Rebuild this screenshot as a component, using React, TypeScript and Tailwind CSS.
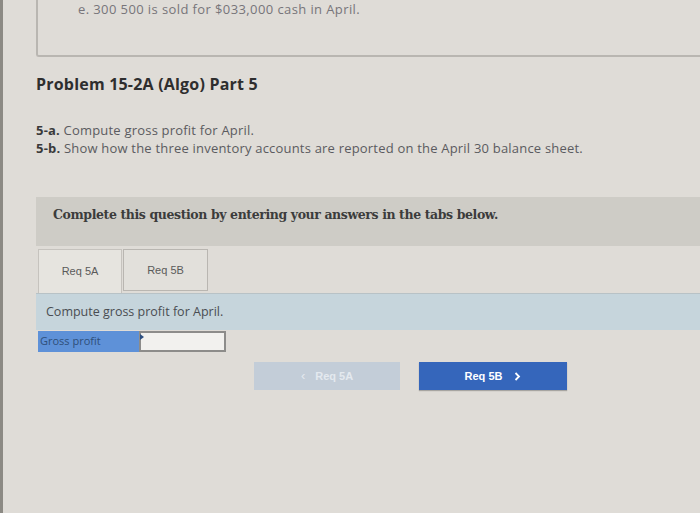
import React from "react";

export default function App() {
  return (
    <div className="w-[700px] h-[513px] overflow-hidden flex bg-[#dfdcd7] text-[#3a3a3a]" style={{ fontFamily: '"Open Sans", "Liberation Sans", sans-serif' }}>
      <div className="w-[3px] shrink-0 bg-[#8c8a84]" />
      <div className="flex-1 flex flex-col pl-[33px]">
        {/* top cropped box */}
        <div className="h-[57px] shrink-0 border-l-2 border-b-2 border-[#b9b6b1] rounded-bl-[3px] overflow-hidden pl-[40px]">
          <div className="mt-[1px] text-[13px] leading-[16px] text-[#77757a] tracking-[0.4px]">e. 300 500 is sold for $033,000 cash in April.</div>
        </div>
        <div className="mt-[15px] text-[16px] font-bold text-[#2e2e2e] tracking-[0.2px]">
          Problem 15-2A (Algo) Part 5
        </div>
        <div className="mt-[25px] text-[13px] leading-[18px] text-[#5b5b60] tracking-[0.2px]">
          <div><span className="font-bold text-[#3a3a3a]">5-a.</span> Compute gross profit for April.</div>
          <div><span className="font-bold text-[#3a3a3a]">5-b.</span> Show how the three inventory accounts are reported on the April 30 balance sheet.</div>
        </div>
        <div className="mt-[40px] h-[49px] shrink-0 bg-[#ceccc6] flex items-start pt-[9px] pl-[17px]">
          <span className="text-[12.5px] font-bold text-[#3c3c3c]" style={{ fontFamily: '"DejaVu Serif", "Liberation Serif", serif', letterSpacing: '-0.4px' }}>
            Complete this question by entering your answers in the tabs below.
          </span>
        </div>
        <div className="flex items-end h-[47px] shrink-0 pl-[2px] pt-[3px]">
          <div className="w-[84px] h-[44px] border border-b-0 border-[#c6c3be] bg-[#e6e4df] flex items-center justify-center text-[11px] text-[#5a5a5a]" style={{ fontFamily: '"Liberation Sans", sans-serif' }}>Req 5A</div>
          <div className="ml-[1px] w-[85px] h-[42px] border border-[#b9b6b1] bg-[#e2e0db] flex items-center justify-center text-[11px] text-[#5a5a5a] mb-[2px]" style={{ fontFamily: '"Liberation Sans", sans-serif' }}>Req 5B</div>
        </div>
        <div className="h-[37px] shrink-0 bg-[#c6d5dc] border-t border-[#b8c2c6] flex items-center pl-[10px] text-[12.5px] text-[#4a4d52]">
          Compute gross profit for April.
        </div>
        <div className="flex mt-[1px] ml-[2px] h-[21px]">
          <div className="w-[101px] bg-[#5e91d8] text-[11px] text-[#2f4f7a] flex items-center pl-[2px]">Gross profit</div>
          <div className="relative w-[87px] bg-[#f2f1ee] border-2 border-[#8d8c8a]">
            <div className="absolute left-[-1px] top-[1px] w-0 h-0 border-t-[3px] border-b-[3px] border-l-[4px] border-t-transparent border-b-transparent border-l-[#2d4f80]" />
          </div>
        </div>
        <div className="flex mt-[10px] ml-[218px] gap-[19px]">
          <div className="w-[146px] h-[28px] bg-[#c3cdd8] flex items-center justify-center gap-[10px] text-[11px] font-bold text-[#e4e9ef]" style={{ fontFamily: '"Liberation Sans", sans-serif' }}>
            <span className="text-[13px] font-normal">‹</span><span>Req 5A</span>
          </div>
          <div className="w-[148px] h-[28px] bg-[#3566bb] flex items-center justify-center gap-[12px] text-[11px] font-bold text-white shadow-[0_1px_1px_rgba(0,0,0,0.25)]" style={{ fontFamily: '"Liberation Sans", sans-serif' }}>
            <span>Req 5B</span>
            <svg width="7" height="9" viewBox="0 0 7 9"><path d="M1.5 1 L5 4.5 L1.5 8" stroke="white" strokeWidth="1.8" fill="none" /></svg>
          </div>
        </div>
      </div>
    </div>
  );
}
